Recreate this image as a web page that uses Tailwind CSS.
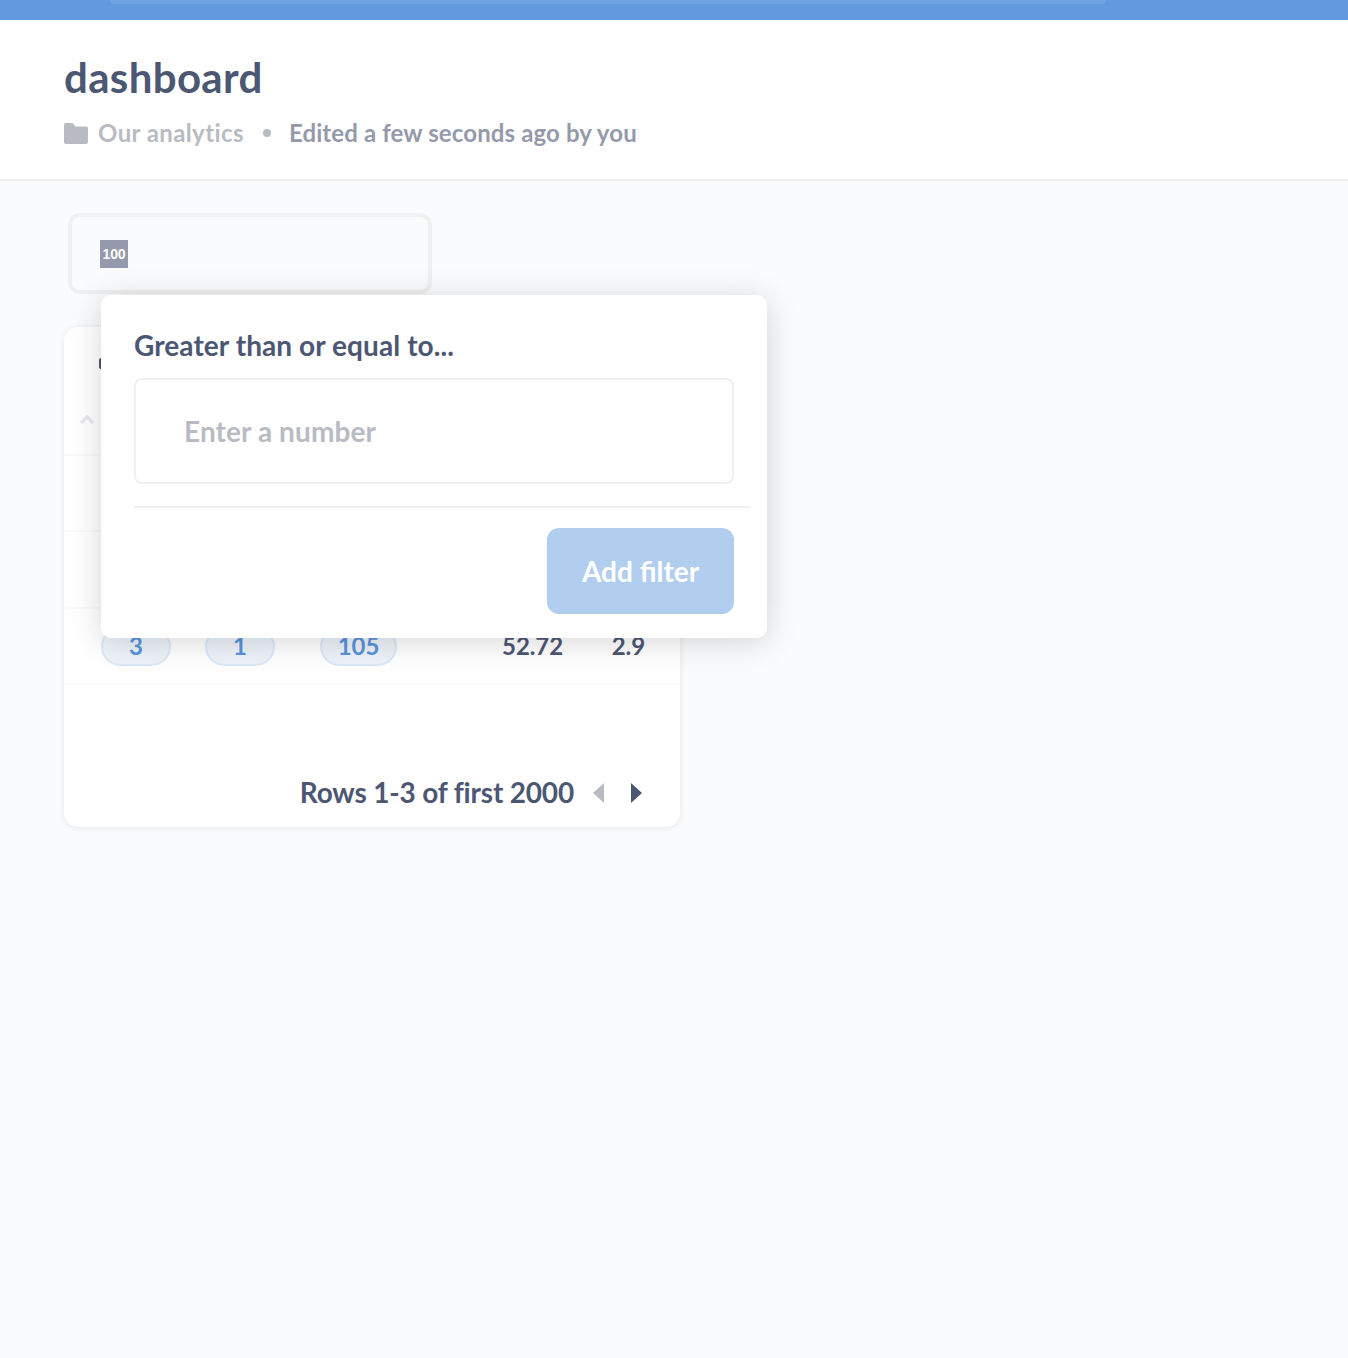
<!DOCTYPE html>
<html lang="en">
<head>
  <meta charset="UTF-8" />
  <title>dashboard</title>
  <script src="https://cdn.jsdelivr.net/npm/@tailwindcss/browser@4"></script>
</head>
<body class="bg-[#f9fbfc] font-['Lato',sans-serif] font-bold text-[#4c5773]">
<div class="relative min-h-[1358px] overflow-hidden">

  <!-- top bar -->
  <div class="h-5 bg-[#6299dc]">
    <div class="ml-[110px] w-[996px] h-1 bg-[#70a3e2] rounded-b-lg"></div>
  </div>

  <!-- header -->
  <div class="h-[161px] bg-white border-b-2 border-[#f0f0f0] pl-16 pt-[31px]">
    <h1 class="text-[42px] leading-[52px] tracking-[0.35px] font-bold">dashboard</h1>
    <div class="flex items-center mt-[16px] h-7 text-[24px]">
      <svg class="w-6 h-[21px] text-[#b8bbc3]" viewBox="0 0 24 21" fill="currentColor"><path d="M0 2a2 2 0 0 1 2-2h6.5l3 3.5H22a2 2 0 0 1 2 2V19a2 2 0 0 1-2 2H2a2 2 0 0 1-2-2z"/></svg>
      <span class="ml-[10px] text-[#b8bbc3] tracking-[0.4px]">Our analytics</span>
      <span class="ml-[19px] w-2 h-2 rounded-full bg-[#b8bbc3]"></span>
      <span class="ml-[18px] text-[#949aab] tracking-[0.12px]">Edited a few seconds ago by you</span>
    </div>
  </div>

  <!-- filter widget -->
  <div class="ml-[68px] mt-[32px] w-[364px] h-[81px] border-4 border-[#f0f0f0] rounded-[12px] flex items-center pl-[28px] pt-[1px]">
    <div class="w-7 h-7 bg-[#949aab] text-white text-[14px] font-['Liberation_Sans',sans-serif] font-bold flex items-center justify-center tracking-[-0.2px]">100</div>
  </div>

  <!-- table card -->
  <div class="ml-16 mt-[33px] w-[616px] h-[500px] bg-white rounded-[14px] shadow-[0_1px_6px_rgba(0,0,0,0.09)] flex flex-col">
    <div class="h-[129px] border-b-2 border-[#f9f9f9] pl-[15px] pt-[87px] relative">
      <!-- sliver of the card title that shows past the popover edge -->
      <span class="absolute left-[35px] top-[31px] w-[2px] h-[11px] bg-[#4c5773] rounded-l-full"></span>
      <svg class="w-4 h-[10px] text-[#e8e9ec]" viewBox="0 0 16 10" fill="none" stroke="currentColor" stroke-width="3.5"><path d="M2 9l6-6 6 6"/></svg>
    </div>
    <div class="h-[76px] border-b-2 border-[#f9f9f9]"></div>
    <div class="h-[77px] border-b-2 border-[#f9f9f9]"></div>
    <div class="h-[76px] border-b-2 border-[#f9f9f9] flex items-center pl-[37px] text-[24px] tracking-[-0.1px]">
      <span class="w-[70px] h-[39px] rounded-[20px] border-2 border-[#dbe8f7] bg-[#eef3f9] text-[#5a94dc] flex items-center justify-center">3</span>
      <span class="ml-[34px] w-[70px] h-[39px] rounded-[20px] border-2 border-[#dbe8f7] bg-[#eef3f9] text-[#5a94dc] flex items-center justify-center">1</span>
      <span class="ml-[45px] w-[77px] h-[39px] rounded-[20px] border-2 border-[#dbe8f7] bg-[#eef3f9] text-[#5a94dc] flex items-center justify-center">105</span>
      <span class="w-[166px] text-right">52.72</span>
      <span class="w-[82px] text-right">2.9</span>
    </div>
    <div class="flex-1 flex items-end justify-end pb-[19px] pr-[38px]">
      <span class="text-[28px] leading-[32px] tracking-[-0.18px] mr-[19px]">Rows 1-3 of first 2000</span>
      <div class="flex items-center h-8 gap-[27px] translate-y-[1px]">
        <svg class="w-[11px] h-5 text-[#b8bbc3]" viewBox="0 0 11 20" fill="currentColor"><path d="M11 0v20L0 10z"/></svg>
        <svg class="w-[11px] h-5" viewBox="0 0 11 20" fill="currentColor"><path d="M0 0v20l11-10z"/></svg>
      </div>
    </div>
  </div>

  <!-- popover -->
  <div class="absolute left-[101px] top-[295px] w-[666px] h-[343px] bg-white rounded-[10px] shadow-[0_4px_32px_rgba(0,0,0,0.16)] pl-[33px] pt-[32px]">
    <div class="text-[28px] leading-[36px] tracking-[0.08px]">Greater than or equal to...</div>
    <div class="mt-[15px] w-[600px] h-[106px] border-2 border-[#f0f0f0] rounded-[8px] flex items-center pl-[48px] text-[28px] tracking-[0.1px] text-[#b8bbc3]">Enter a number</div>
    <div class="mt-[22px] w-[616px] border-t-2 border-[#f0f0f0]"></div>
    <div class="mt-[20px] w-[600px] flex justify-end">
      <div class="w-[187px] h-[86px] rounded-[12px] bg-[#b1ceee] text-white text-[28px] flex items-center justify-center">Add filter</div>
    </div>
  </div>

</div>
</body>
</html>
